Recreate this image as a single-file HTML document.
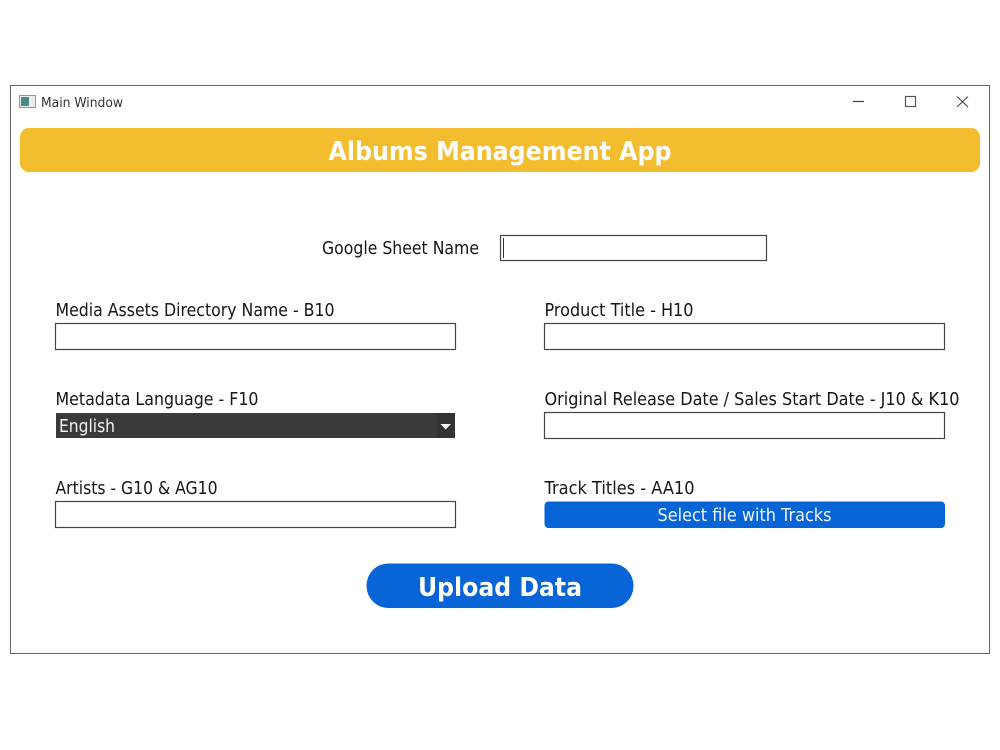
<!DOCTYPE html>
<html lang="en">
<head>
<meta charset="utf-8">
<title>Main Window</title>
<style>
html,body{margin:0;padding:0;background:#fff;width:1000px;height:750px;overflow:hidden}
svg{display:block}
text{font-family:"DejaVu Sans","Liberation Sans",sans-serif}
.l{font-size:17.8px;fill:#161616}
.b{font-weight:bold;fill:#fff}
.i{fill:#fff;stroke:#444;stroke-width:1.2}
</style>
</head>
<body>
<svg width="1000" height="750" viewBox="0 0 1000 750" xmlns="http://www.w3.org/2000/svg">
<rect x="10.5" y="85.5" width="979" height="568" fill="#fff" stroke="#666" stroke-width="1"/>

<!-- title bar -->
<rect x="19.5" y="95.5" width="16" height="12" fill="#e8eeee" stroke="#8a9a9a"/>
<rect x="21" y="97" width="8" height="9" fill="#4d8a86"/>
<text x="41" y="107" font-size="13" fill="#333" textLength="82" lengthAdjust="spacingAndGlyphs">Main Window</text>
<path d="M853 101.5H864" stroke="#444" stroke-width="1.2"/>
<rect x="905.5" y="96.5" width="10" height="10" fill="none" stroke="#555" stroke-width="1.2"/>
<path d="M957 96.5L968 107M968 96.5L957 107" stroke="#444" stroke-width="1.1" fill="none"/>

<!-- header -->
<rect x="20" y="128" width="960" height="44" rx="9" fill="#f4bc2f"/>
<text x="328.5" y="160" class="b" font-size="26" textLength="343" lengthAdjust="spacingAndGlyphs">Albums Management App</text>

<!-- google sheet -->
<text x="322" y="254" class="l" textLength="157" lengthAdjust="spacingAndGlyphs">Google Sheet Name</text>
<rect x="500.5" y="235.5" width="266" height="25" class="i"/>
<path d="M503.5 238V258" stroke="#333" stroke-width="1"/>

<!-- left column -->
<text x="55.5" y="316" class="l" textLength="279" lengthAdjust="spacingAndGlyphs">Media Assets Directory Name - B10</text>
<rect x="55.5" y="323.5" width="400" height="26" class="i"/>

<text x="55.5" y="405" class="l" textLength="203" lengthAdjust="spacingAndGlyphs">Metadata Language - F10</text>
<rect x="56" y="413" width="399" height="25" fill="#3a3a3a"/>
<rect x="437" y="413" width="18" height="25" fill="#333"/>
<text x="59" y="432" class="l" style="fill:#f2f2f2" textLength="56" lengthAdjust="spacingAndGlyphs">English</text>
<path d="M440.5 424H451L445.7 429.5Z" fill="#fff"/>

<text x="55.5" y="494" class="l" textLength="162" lengthAdjust="spacingAndGlyphs">Artists - G10 &amp; AG10</text>
<rect x="55.5" y="501.5" width="400" height="26" class="i"/>

<!-- right column -->
<text x="544.5" y="316" class="l" textLength="149" lengthAdjust="spacingAndGlyphs">Product Title - H10</text>
<rect x="544.5" y="323.5" width="400" height="26" class="i"/>

<text x="544.5" y="405" class="l" textLength="415" lengthAdjust="spacingAndGlyphs">Original Release Date / Sales Start Date - J10 &amp; K10</text>
<rect x="544.5" y="412.5" width="400" height="26" class="i"/>

<text x="544.5" y="494" class="l" textLength="150" lengthAdjust="spacingAndGlyphs">Track Titles - AA10</text>
<rect x="544.5" y="501.5" width="400.5" height="26.5" rx="4" fill="#0764d6"/>
<text x="657.5" y="521" class="l" style="fill:#f2f6fd" textLength="174" lengthAdjust="spacingAndGlyphs">Select file with Tracks</text>

<!-- upload -->
<rect x="366.5" y="563.5" width="267" height="44.5" rx="22" fill="#0764d6"/>
<text x="418" y="596" class="b" font-size="26" textLength="164" lengthAdjust="spacingAndGlyphs">Upload Data</text>
</svg>
</body>
</html>
